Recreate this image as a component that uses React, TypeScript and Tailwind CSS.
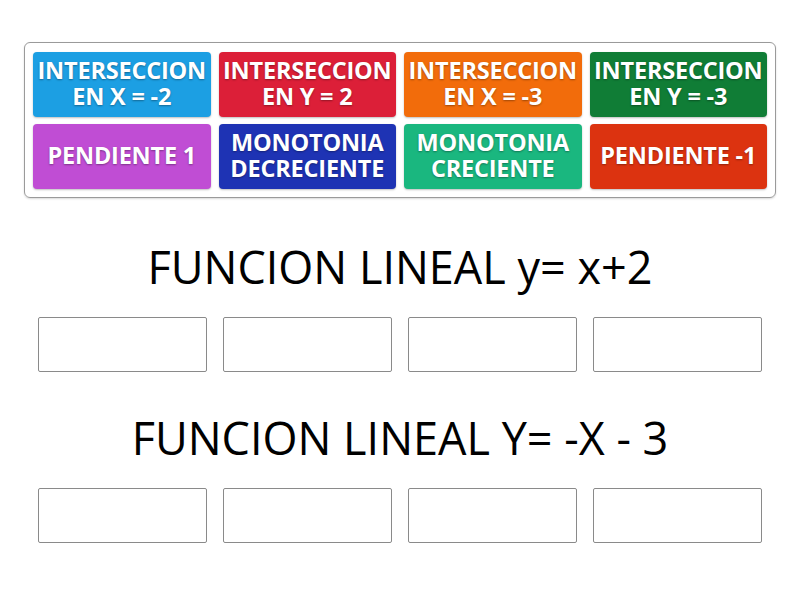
import React from 'react';

const tiles = [
  { lines: ['INTERSECCION', 'EN X = -2'], color: 'bg-[#1c9fe3]' },
  { lines: ['INTERSECCION', 'EN Y = 2'], color: 'bg-[#dc1f38]' },
  { lines: ['INTERSECCION', 'EN X = -3'], color: 'bg-[#f26c0b]' },
  { lines: ['INTERSECCION', 'EN Y = -3'], color: 'bg-[#107d36]' },
  { lines: ['PENDIENTE 1'], color: 'bg-[#c04dd4]' },
  { lines: ['MONOTONIA', 'DECRECIENTE'], color: 'bg-[#1e33b4]' },
  { lines: ['MONOTONIA', 'CRECIENTE'], color: 'bg-[#1ab77f]' },
  { lines: ['PENDIENTE -1'], color: 'bg-[#dc3310]' },
];

const Drops: React.FC = () => (
  <div className="grid grid-cols-4 gap-x-[16px] px-[38px]">
    {[0, 1, 2, 3].map((i) => (
      <div key={i} className="h-[55px] rounded-[2px] border border-[#8a8a8a] bg-white" />
    ))}
  </div>
);

const App: React.FC = () => {
  return (
    <div className="w-[800px] h-[600px] bg-white" style={{ fontFamily: '"Open Sans", sans-serif' }}>
      <div className="px-[24px] pt-[42px]">
        <div className="rounded-[6px] border border-[#9a9a9a] px-[8px] pt-[9px] pb-[8px] shadow-[0_1px_2px_rgba(0,0,0,0.15)]">
          <div className="grid grid-cols-4 gap-x-[8px] gap-y-[7px]">
            {tiles.map((t, i) => (
              <div
                key={i}
                className={`${t.color} h-[65px] pb-[4px] rounded-[4px] flex flex-col items-center justify-center text-white font-bold text-[23.5px] leading-[26px] tracking-[-0.2px] shadow-[0_1px_2px_rgba(0,0,0,0.25)] [text-shadow:0_1px_2px_rgba(0,0,0,0.35)]`}
              >
                {t.lines.map((l) => (
                  <span key={l} className="whitespace-nowrap">{l}</span>
                ))}
              </div>
            ))}
          </div>
        </div>
      </div>

      <div className="mt-[41px] text-center text-[45px] leading-[56px] text-black">FUNCION LINEAL y= x+2</div>
      <div className="mt-[22px]">
        <Drops />
      </div>

      <div className="mt-[38px] text-center text-[45px] leading-[56px] text-black">FUNCION LINEAL Y= -X - 3</div>
      <div className="mt-[22px]">
        <Drops />
      </div>
    </div>
  );
};

export default App;
